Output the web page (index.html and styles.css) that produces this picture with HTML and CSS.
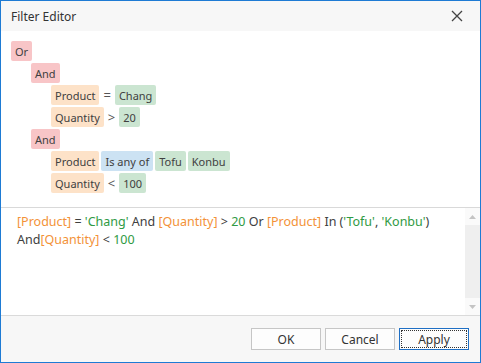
FILE: index.html
```html
<!DOCTYPE html>
<html>
<head>
<meta charset="utf-8">
<link rel="stylesheet" href="styles.css">
</head>
<body>
<div class="window">
  <div class="titlebar">
    <span class="title">Filter Editor</span>
    <svg class="close" width="12" height="12" viewBox="0 0 12 12"><path d="M1 1L11 11M11 1L1 11" stroke="#444" stroke-width="1.3" fill="none"/></svg>
  </div>
  <div class="tree">
    <div class="row l0"><span class="chip grp">Or</span></div>
    <div class="row l1"><span class="chip grp">And</span></div>
    <div class="row l2"><span class="chip fld">Product</span><span class="op">=</span><span class="chip val">Chang</span></div>
    <div class="row l2"><span class="chip fld">Quantity</span><span class="op">&gt;</span><span class="chip val">20</span></div>
    <div class="row l1"><span class="chip grp">And</span></div>
    <div class="row l2"><span class="chip fld">Product</span><span class="chip opc">Is any of</span><span class="chip val">Tofu</span><span class="chip val">Konbu</span></div>
    <div class="row l2"><span class="chip fld">Quantity</span><span class="op">&lt;</span><span class="chip val">100</span></div>
  </div>
  <div class="editor">
    <div class="code">
      <div class="line"><span class="f">[Product]</span> = <span class="v">'Chang'</span> And <span class="f">[Quantity]</span> &gt; <span class="v">20</span> Or <span class="f">[Product]</span> In (<span class="v">'Tofu'</span>, <span class="v">'Konbu'</span>)</div>
      <div class="line">And<span class="f">[Quantity]</span> &lt; <span class="v">100</span></div>
    </div>
    <div class="scrollbar">
      <div class="sbtn"><svg width="7" height="4" viewBox="0 0 7 4"><path d="M0 4L3.5 0L7 4Z" fill="#c4c4c4"/></svg></div>
      <div class="strack"></div>
      <div class="sbtn"><svg width="7" height="4" viewBox="0 0 7 4"><path d="M0 0L3.5 4L7 0Z" fill="#c4c4c4"/></svg></div>
    </div>
  </div>
  <div class="footer">
    <button class="btn">OK</button>
    <button class="btn">Cancel</button>
    <button class="btn primary"><span class="focus">Apply</span></button>
  </div>
</div>
</body>
</html>
```

FILE: styles.css
```css
* { box-sizing: border-box; }
html, body { margin: 0; padding: 0; background: #fff; }
.window {
  width: 481px;
  height: 363px;
  border: 1px solid #1e7bd4;
  display: flex;
  flex-direction: column;
  font-family: "Noto Sans", "DejaVu Sans", sans-serif;
  color: #404040;
  background: #fff;
}
.titlebar {
  height: 30px;
  flex: none;
  background: #f7f7f7;
  display: flex;
  align-items: center;
  justify-content: space-between;
  padding: 0 17px 0 10px;
}
.title { font-size: 12px; color: #333; }
.close { display: block; }
.tree {
  flex: none;
  height: 176px;
  padding: 10px 0 0 10px;
  display: flex;
  flex-direction: column;
  gap: 2px;
  font-size: 11px;
}
.row { display: flex; gap: 2px; align-items: center; height: 20px; }
.l1 { padding-left: 20px; }
.l2 { padding-left: 40px; }
.chip {
  height: 20px;
  display: inline-flex;
  align-items: center;
  padding: 0 4px;
  border-radius: 2px;
  color: #404040;
}
.grp { background: #f8c5c7; }
.fld { background: #fde2c8; }
.val { background: #cbe5d1; }
.opc { background: #cce2f3; }
.op { padding: 0 2px; font-size: 13px; color: #555; }
.editor {
  flex: none;
  height: 109px;
  border-top: 1px solid #d9d9d9;
  border-bottom: 1px solid #dadada;
  display: flex;
}
.code {
  flex: 1;
  padding: 5px 0 0 16px;
  font-size: 12.5px;
  line-height: 18px;
  color: #404040;
}
.f { color: #f39238; }
.v { color: #2f9a43; }
.scrollbar {
  width: 15px;
  flex: none;
  background: #efefef;
  display: flex;
  flex-direction: column;
}
.sbtn {
  height: 17px;
  background: #fafafa;
  display: flex;
  align-items: center;
  justify-content: center;
}
.strack { flex: 1; }
.footer {
  flex: 1;
  background: #f7f7f7;
  display: flex;
  justify-content: flex-end;
  align-items: center;
  gap: 4px;
  padding: 0 11px 0 0;
}
.btn {
  width: 70px;
  height: 22px;
  border: 1px solid #c6c6c6;
  background: #fdfdfd;
  font-family: "Noto Sans", "DejaVu Sans", sans-serif;
  font-size: 12px;
  color: #333;
  padding: 0;
  display: flex;
  align-items: center;
  justify-content: center;
}
.primary { border: 1px solid #1f6fc4; padding: 1px; }
.focus {
  width: 100%;
  height: 100%;
  border: 1px dotted #333;
  display: flex;
  align-items: center;
  justify-content: center;
}
```
